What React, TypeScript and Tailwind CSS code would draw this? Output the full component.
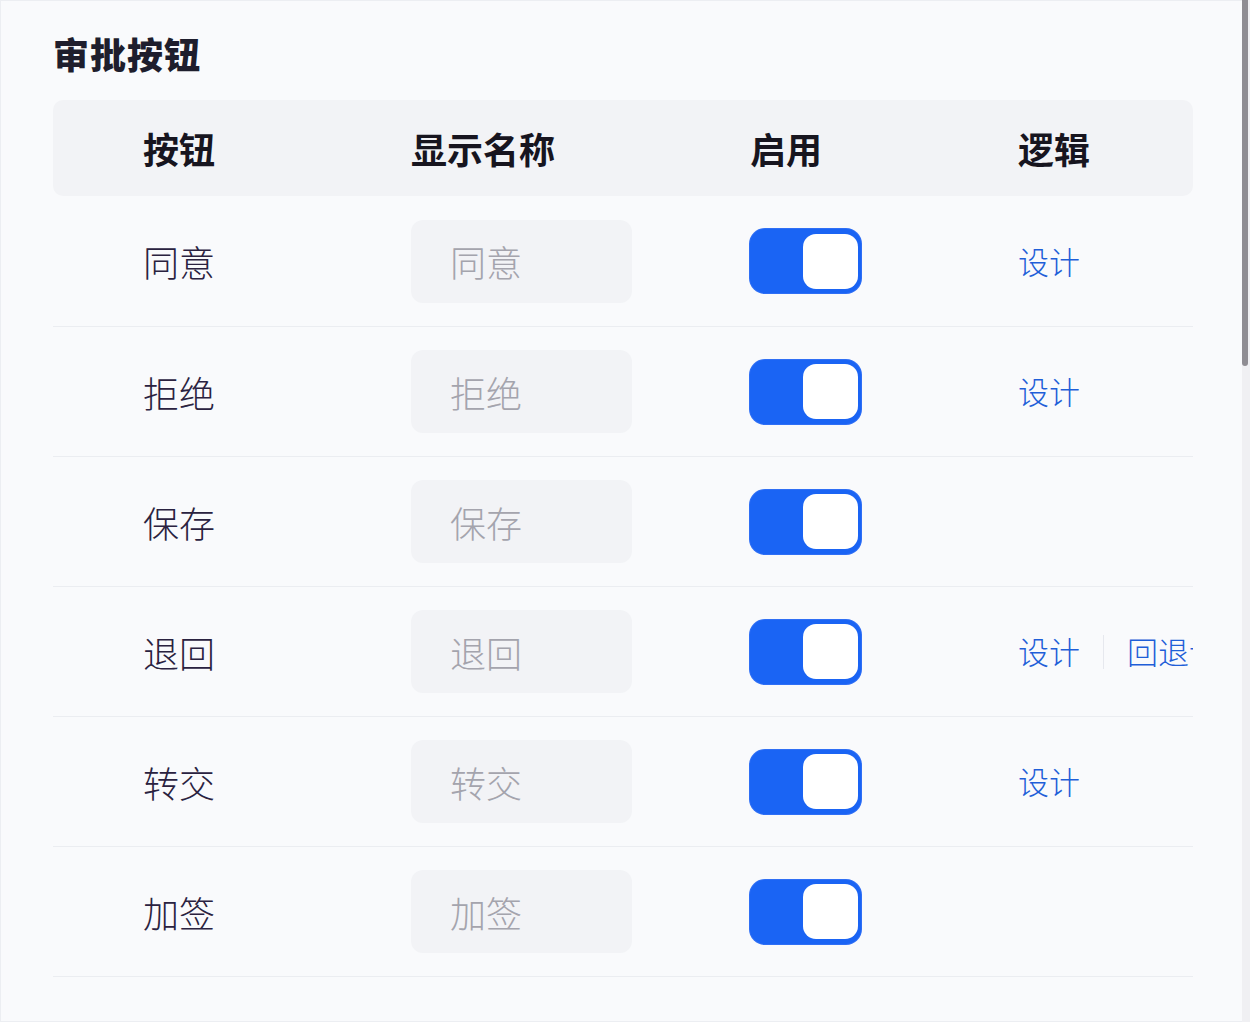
import React from "react";

const rows: { name: string; links: string[] }[] = [
  { name: "同意", links: ["设计"] },
  { name: "拒绝", links: ["设计"] },
  { name: "保存", links: [] },
  { name: "退回", links: ["设计", "回退设置"] },
  { name: "转交", links: ["设计"] },
  { name: "加签", links: [] },
];

function Toggle() {
  return (
    <div className="w-[111px] h-[64px] rounded-[15px] bg-[#1a64f4] flex items-center justify-end pr-[3px] shadow-[0_0_0_1px_#2f6ff5]">
      <div className="w-[55px] h-[55px] rounded-[13px] bg-white" />
    </div>
  );
}

export default function App() {
  return (
    <div
      className="w-[1250px] h-[1022px] flex bg-[#f9fafc] overflow-hidden"
      style={{ fontFamily: '"Noto Sans CJK SC", "Noto Sans", sans-serif' }}
    >
      <div className="flex-1 h-full border border-[#eceef2] border-r-0 flex flex-col">
        <div className="pl-[52px] pr-[48px] pt-[26px]">
          <h1 className="text-[36px] leading-[52px] font-black text-[#1e1e2d] tracking-[1px]">审批按钮</h1>
          <div className="mt-[21px] w-[1140px]">
            <div className="grid grid-cols-[358px_339px_268px_175px] h-[96px] items-center bg-[#f2f3f6] rounded-[10px] text-[36px] font-bold text-[#17151f]">
              <div className="pl-[90px]">按钮</div>
              <div>显示名称</div>
              <div>启用</div>
              <div>逻辑</div>
            </div>
            {rows.map((r, i) => (
              <div
                key={i}
                className={`grid grid-cols-[358px_339px_268px_175px] items-center border-b border-[#ebedf1] ${i === 0 ? "h-[131px]" : "h-[130px]"}`}
              >
                <div className="pl-[90px] text-[36px] font-light text-[#2a2240]">{r.name}</div>
                <div>
                  <div className="w-[221px] h-[83px] rounded-[12px] bg-[#f2f3f6] flex items-center pl-[39px] text-[36px] font-light text-[#a4a4ad]">
                    {r.name}
                  </div>
                </div>
                <div>
                  <Toggle />
                </div>
                <div className="overflow-hidden flex items-center whitespace-nowrap text-[31px] font-light text-[#1f5fd8]">
                  {r.links.map((l, j) => (
                    <React.Fragment key={j}>
                      {j > 0 && <span className="mx-[23px] w-px h-[34px] bg-[#e6e8ee] shrink-0" />}
                      <span>{l}</span>
                    </React.Fragment>
                  ))}
                </div>
              </div>
            ))}
          </div>
        </div>
      </div>
      <div className="w-[8px] h-full flex flex-col bg-[#f0f0f3]">
        <div className="h-[366px] w-[6px] bg-[#8f8d93] rounded-b-[3px]" />
      </div>
    </div>
  );
}
